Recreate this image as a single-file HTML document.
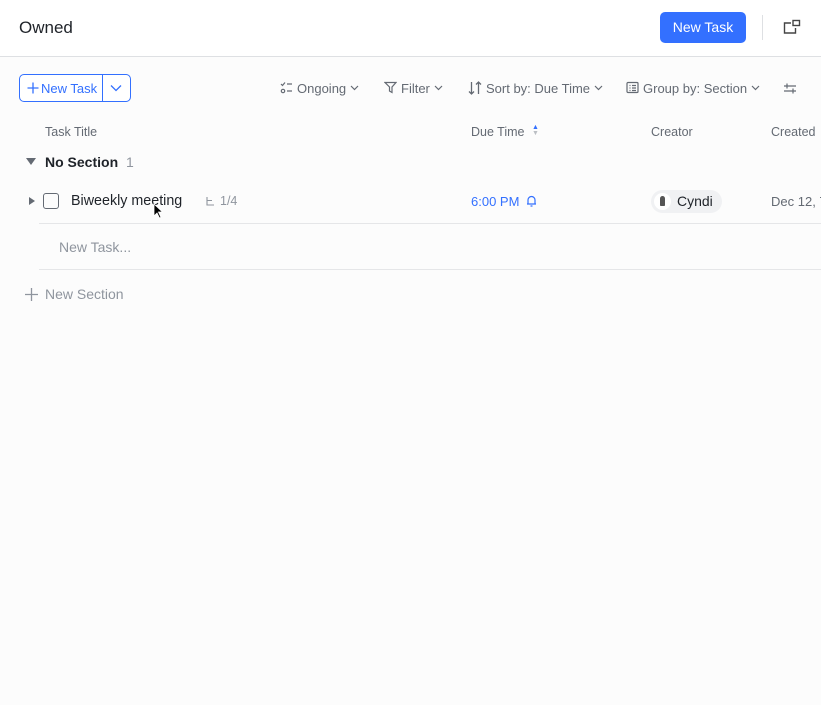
<!DOCTYPE html>
<html><head><style>
*{margin:0;padding:0;box-sizing:border-box}
body{width:821px;height:705px;overflow:hidden;background:#fcfcfc;font-family:"Liberation Sans",sans-serif;color:#1f2329;position:relative}
.a{position:absolute;white-space:nowrap}
.g{color:#646a73;font-size:13px}
svg{display:block}
.c{display:inline-block;width:9px;height:6px;margin-left:4px;vertical-align:2px}
</style></head><body>
<div class="a" style="left:0;top:0;width:821px;height:57px;background:#fff;border-bottom:1px solid #dee0e3"></div>
<div class="a" style="left:19px;top:18px;font-size:17px">Owned</div>
<div class="a" style="left:660px;top:12px;width:86px;height:31px;background:#3370ff;border-radius:5px;color:#fff;font-size:14px;line-height:31px;text-align:center">New Task</div>
<div class="a" style="left:762px;top:15px;width:1px;height:25px;background:#dee0e3"></div>
<svg class="a" style="left:783px;top:19px" width="18" height="16" viewBox="0 0 18 16" fill="none" stroke="#444" stroke-width="1.4"><path d="M8 4H1.5v10h11V9"/><rect x="10" y="1.5" width="6.5" height="5"/></svg>

<div class="a" style="left:19px;top:74px;width:112px;height:28px;border:1px solid #3370ff;border-radius:5px;background:#fff"></div>
<div class="a" style="left:102px;top:74px;width:1px;height:28px;background:#3370ff"></div>
<svg class="a" style="left:27px;top:82px" width="12" height="12"><path d="M6 0.5v11M0.5 6h11" stroke="#3370ff" stroke-width="1.3"/></svg>
<div class="a" style="left:41px;top:81px;font-size:13px;color:#3370ff">New Task</div>
<svg class="a" style="left:110px;top:84px" width="12" height="8"><path d="M1 1.5l5 5 5-5" stroke="#3370ff" fill="none" stroke-width="1.3"/></svg>

<svg class="a" style="left:280px;top:81px" width="13" height="13" fill="none" stroke="#646a73" stroke-width="1.2"><path d="M1 3l1.5 1.5L5 1.5M7 3h5M7 10h5"/><circle cx="3" cy="10" r="1.7"/></svg>
<div class="a g" style="left:297px;top:81px">Ongoing<svg class="c" viewBox="0 0 9 6"><path d="M1 1l3.5 3.5L8 1" stroke="#646a73" fill="none" stroke-width="1.2"/></svg></div>
<svg class="a" style="left:384px;top:81px" width="13" height="13" fill="none" stroke="#646a73" stroke-width="1.2"><path d="M1 1.5h11L8 6v5.5L5.5 10V6z"/></svg>
<div class="a g" style="left:401px;top:81px">Filter<svg class="c" viewBox="0 0 9 6"><path d="M1 1l3.5 3.5L8 1" stroke="#646a73" fill="none" stroke-width="1.2"/></svg></div>
<svg class="a" style="left:468px;top:81px" width="14" height="14" fill="none" stroke="#646a73" stroke-width="1.3"><path d="M3.5 1v12M1 10.5l2.5 2.5L6 10.5M10.5 13V1M8 3.5L10.5 1 13 3.5"/></svg>
<div class="a g" style="left:486px;top:81px">Sort by: Due Time<svg class="c" viewBox="0 0 9 6"><path d="M1 1l3.5 3.5L8 1" stroke="#646a73" fill="none" stroke-width="1.2"/></svg></div>
<svg class="a" style="left:626px;top:81px" width="13" height="13" fill="none" stroke="#646a73" stroke-width="1.2"><rect x="1" y="1.5" width="11" height="10" rx="1"/><path d="M3.5 4.5h1M6 4.5h4M3.5 7h1M6 7h4M3.5 9.5h1M6 9.5h4"/></svg>
<div class="a g" style="left:643px;top:81px">Group by: Section<svg class="c" viewBox="0 0 9 6"><path d="M1 1l3.5 3.5L8 1" stroke="#646a73" fill="none" stroke-width="1.2"/></svg></div>
<svg class="a" style="left:783px;top:81px" width="14" height="14" fill="none" stroke="#646a73" stroke-width="1.2"><path d="M1 5h12M1 10h12M4 2.5v5M10 7.5v5"/></svg>

<div class="a g" style="left:45px;top:125px;font-size:12.5px">Task Title</div>
<div class="a g" style="left:471px;top:125px;font-size:12.5px">Due Time</div>
<div class="a" style="left:532px;top:125px;font-size:7px;color:#3370ff;line-height:6px">▲<br><span style="color:#bbbfc4">▼</span></div>
<div class="a g" style="left:651px;top:125px;font-size:12.5px">Creator</div>
<div class="a g" style="left:771px;top:125px;font-size:12.5px">Created</div>

<svg class="a" style="left:26px;top:158px" width="10" height="7"><path d="M0 0h10L5 7z" fill="#646a73"/></svg>
<div class="a" style="left:45px;top:154px;font-size:14px;font-weight:bold;color:#1f2329">No Section <span style="font-weight:normal;color:#8f959e;margin-left:4px">1</span></div>

<svg class="a" style="left:29px;top:197px" width="6" height="8"><path d="M0 0v8l6-4z" fill="#646a73"/></svg>
<div class="a" style="left:43px;top:193px;width:16px;height:16px;border:1.3px solid #646a73;border-radius:3px"></div>
<div class="a" style="left:71px;top:193px;font-size:14.3px">Biweekly meeting</div>
<svg class="a" style="left:205px;top:196px" width="10" height="11" fill="none" stroke="#8f959e" stroke-width="1.1"><path d="M2 1v8h7M2 4.5h5"/></svg>
<div class="a" style="left:220px;top:194px;font-size:12.5px;color:#8f959e">1/4</div>
<div class="a" style="left:471px;top:194px;font-size:13px;color:#3370ff">6:00 PM</div>
<svg class="a" style="left:526px;top:195px" width="11" height="12" fill="none" stroke="#3370ff" stroke-width="1.2"><path d="M2 9V5a3.5 3.5 0 017 0v4H1h9M4.5 11h2"/></svg>
<div class="a" style="left:651px;top:190px;width:71px;height:23px;border-radius:12px;background:#f0f1f3"></div>
<div class="a" style="left:654px;top:193px;width:17px;height:17px;border-radius:50%;background:#fff"></div>
<div class="a" style="left:660px;top:196px;width:5px;height:10px;border-radius:3px 3px 1px 1px;background:#555"></div>
<div class="a" style="left:677px;top:193px;font-size:14px">Cyndi</div>
<div class="a g" style="left:771px;top:194px">Dec 12, 7</div>
<div class="a" style="left:39px;top:223px;width:782px;height:1px;background:#e5e6e8"></div>
<div class="a" style="left:59px;top:239px;font-size:14px;color:#8f959e">New Task...</div>
<div class="a" style="left:39px;top:269px;width:782px;height:1px;background:#e5e6e8"></div>
<svg class="a" style="left:25px;top:288px" width="13" height="13"><path d="M6.5 0v13M0 6.5h13" stroke="#8f959e" stroke-width="1.3"/></svg>
<div class="a" style="left:45px;top:286px;font-size:14px;color:#8f959e">New Section</div>
<svg class="a" style="left:153px;top:203px" width="11" height="16"><path d="M1 1v12l3-3 2.5 5 1.5-.7L5.5 9H9.5z" fill="#000" stroke="#fff" stroke-width="0.8"/></svg>
</body></html>
